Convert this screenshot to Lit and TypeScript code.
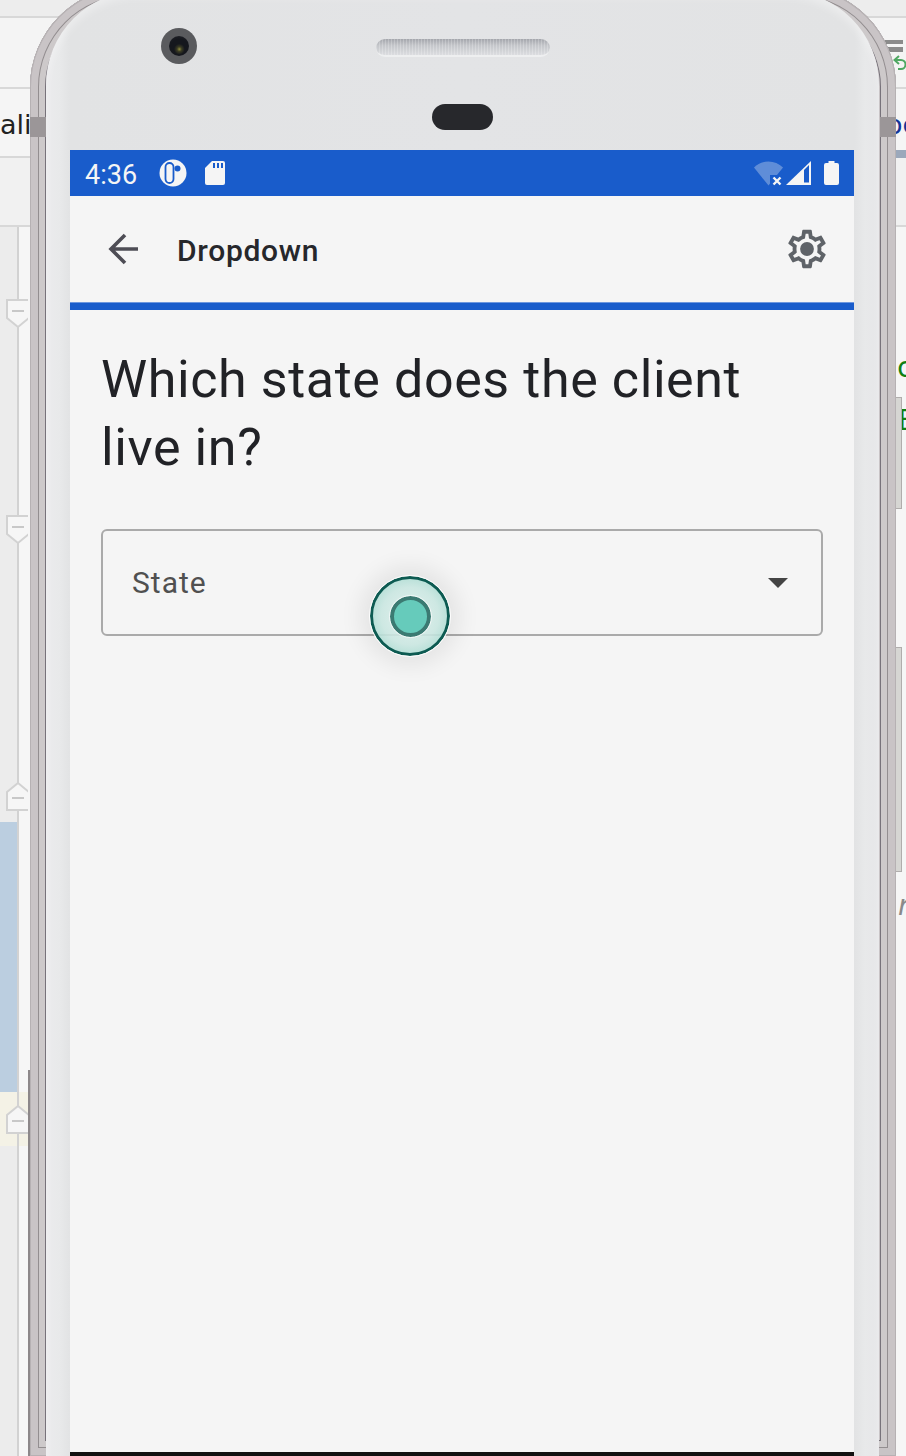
import {LitElement, css, html, svg} from "lit";
import {customElement} from "lit/decorators.js";

const GEAR = "M19.43 12.98c.04-.32.07-.64.07-.98 0-.34-.03-.66-.07-.98l2.11-1.65c.19-.15.24-.42.12-.64l-2-3.46c-.09-.16-.26-.25-.44-.25-.06 0-.12.01-.17.03l-2.49 1c-.52-.4-1.08-.73-1.69-.98l-.38-2.65C14.46 2.18 14.25 2 14 2h-4c-.25 0-.46.18-.49.42l-.38 2.65c-.61.25-1.17.59-1.69.98l-2.49-1c-.06-.02-.12-.03-.18-.03-.17 0-.34.09-.43.25l-2 3.46c-.13.22-.07.49.12.64l2.11 1.65c-.04.32-.07.65-.07.98 0 .33.03.66.07.98l-2.11 1.65c-.19.15-.24.42-.12.64l2 3.46c.09.16.26.25.44.25.06 0 .12-.01.17-.03l2.49-1c.52.4 1.08.73 1.69.98l.38 2.65c.03.24.24.42.49.42h4c.25 0 .46-.18.49-.42l.38-2.65c.61-.25 1.17-.59 1.69-.98l2.49 1c.06.02.12.03.18.03.17 0 .34-.09.43-.25l2-3.46c.12-.22.07-.49-.12-.64l-2.11-1.65zm-1.98-1.71c.04.31.05.52.05.73 0 .21-.02.43-.05.73l-.14 1.13.89.7 1.08.84-.7 1.21-1.27-.51-1.04-.42-.9.68c-.43.32-.84.56-1.25.73l-1.06.43-.16 1.13-.2 1.35h-1.4l-.19-1.35-.16-1.13-1.06-.43c-.43-.18-.83-.41-1.23-.71l-.91-.7-1.06.43-1.27.51-.7-1.21 1.08-.84.89-.7-.14-1.13c-.03-.31-.05-.54-.05-.74s.02-.43.05-.73l.14-1.13-.89-.7-1.08-.84.7-1.21 1.27.51 1.04.42.9-.68c.43-.32.84-.56 1.25-.73l1.06-.43.16-1.13.2-1.35h1.39l.19 1.35.16 1.13 1.06.43c.43.18.83.41 1.23.71l.91.7 1.06-.43 1.27-.51.7 1.21-1.07.85-.89.7.14 1.13z";

// the little fold markers in the editor gutter behind the phone
const foldDown = (top: number) => svg`
    <svg class="fold" style="top:${top}px" width="28" height="30" viewBox="0 0 28 30">
        <path d="M7 1H29V19L18 28 7 19Z" fill="#f6f6f6" stroke="#d2d2d2" stroke-width="2"/>
        <path d="M12 12h12" stroke="#c8c8c8" stroke-width="2"/>
    </svg>`;
const foldUp = (top: number) => svg`
    <svg class="fold" style="top:${top}px" width="28" height="30" viewBox="0 0 28 30">
        <path d="M7 28H29V10L18 1 7 10Z" fill="#f6f6f6" stroke="#d2d2d2" stroke-width="2"/>
        <path d="M12 16h12" stroke="#c8c8c8" stroke-width="2"/>
    </svg>`;

@customElement("app-root")
export class AppRoot extends LitElement {
    static styles = css`
        :host {
            display: block;
            position: relative;
            width: 906px;
            height: 1456px;
            overflow: hidden;
            background: #f6f6f6;
            font-family: Roboto, "Liberation Sans", sans-serif;
        }

        /* editor window behind the phone */
        .desk {
            display: flex;
            justify-content: space-between;
            height: 100%;
        }
        .side {
            display: flex;
            flex-direction: column;
            width: 100px;
        }
        .row {
            box-sizing: border-box;
            border-bottom: 2px solid #d8d8d8;
            overflow: hidden;
            white-space: nowrap;
        }
        .r0 { height: 18px; background: #ededed; }
        .r1 { height: 71px; background: #f4f4f4; }
        .r2 {
            height: 69px;
            background: #f5f5f5;
            font: 27px/72px "DejaVu Sans", sans-serif;
            color: #222;
        }
        .r3 { height: 69px; background: #f1f1f1; }
        .side.right .r2 {
            padding-left: 80px;
            color: #12349a;
            border-bottom: 8px solid #9ba8bb;
        }
        .gutter {
            position: relative;
            flex: 1;
            display: grid;
            grid-template-columns: 17px 2px 1fr;
        }
        .lane {
            display: flex;
            flex-direction: column;
            background: #ececec;
        }
        .lane .plain { height: 595px; }
        .lane .sel { height: 270px; background: #bbcee0; }
        .lane .warn { height: 54px; background: #f4f2e6; }
        .lane .rest { flex: 1; }
        .rule { background: #d2d2d2; }
        .pad { background: #f6f6f6; display: flex; flex-direction: column; }
        .pad .warn {
            height: 54px;
            margin-top: 865px;
            background: #f4f2e6;
        }
        .fold {
            position: absolute;
            left: 0;
        }
        .tail {
            flex: 1;
            position: relative;
            background: #f6f6f6;
        }
        .code {
            position: absolute;
            font: 28px/30px "DejaVu Sans Mono", monospace;
        }
        .code.green { color: #118011; top: 126px; left: 90px; }
        .code.dash { color: #118011; top: 179px; left: 92px; }
        .code.note { color: #8a8a8a; font-style: italic; top: 664px; left: 90px; }
        .bars {
            display: flex;
            flex-direction: column;
            align-items: flex-end;
            gap: 3px;
            padding: 22px 3px 0 0;
        }
        .bars i {
            display: block;
            width: 24px;
            height: 4px;
            background: #8b8b8b;
        }
        .bars i + i { height: 5px; }
        .undo {
            display: flex;
            gap: 0;
            margin-right: -3px;
        }
        .undo i {
            width: 14px;
            height: 4px;
            margin-top: 7px;
            background: #8b8b8b;
        }

        /* phone body */
        .shell {
            position: absolute;
            left: 30px;
            top: -13px;
            box-sizing: border-box;
            width: 866px;
            height: 1469px;
            padding: 4px 17px 0 16px;
            display: flex;
            border-radius: 100px 100px 0 0;
            background: #c9c4c6;
            box-shadow:
                inset 0 0 0 1px #b6b1b3,
                inset 0 0 0 8px #c9c4c6,
                inset 0 0 0 9px #938e90,
                inset 0 0 0 15px #cdc9ca,
                inset 0 0 0 16px #77727a;
        }
        .band {
            position: absolute;
            top: 130px;
            width: 16px;
            height: 20px;
            background: #9b9698;
        }
        .band.l { left: 0; }
        .band.r { right: 0; }
        .strip {
            position: absolute;
            left: -2px;
            top: 1083px;
            bottom: 0;
            width: 2px;
            background: #8c8789;
        }
        .key {
            position: absolute;
            left: 866px;
            box-sizing: border-box;
            width: 6px;
            border: 1px solid #b0adac;
            border-left: 0;
            background: #d6d6d3;
        }
        .key.a { top: 410px; height: 112px; }
        .key.b { top: 660px; height: 225px; }
        .bezel {
            flex: 1;
            display: flex;
            flex-direction: column;
            border-radius: 94px 94px 0 0;
            background: linear-gradient(90deg, #ebebed 0, #e8e9ea 14px, #e2e3e4 24px, #e3e4e6 50%, #e2e3e4 calc(100% - 24px), #e8e9ea calc(100% - 14px), #e6e6e8 100%);
            box-shadow: inset 0 6px 8px rgba(255, 255, 255, .35);
        }
        .top {
            display: grid;
            grid-template-columns: 1fr auto 1fr;
            height: 159px;
        }
        .camera {
            display: flex;
            align-items: center;
            justify-content: center;
            justify-self: start;
            width: 36px;
            height: 36px;
            margin: 37px 0 0 115px;
            border-radius: 50%;
            background: #5a5b5e;
        }
        .camera span {
            width: 20px;
            height: 20px;
            border-radius: 50%;
            background: radial-gradient(circle at 52% 66%, #8d8a3c 0, #3a3b24 14%, #15171d 32%, #15171d 60%, #25262c 100%);
        }
        .middle {
            display: flex;
            flex-direction: column;
            align-items: center;
        }
        .speaker {
            box-sizing: border-box;
            width: 174px;
            height: 18px;
            margin-top: 48px;
            border-radius: 9px;
            border-bottom: 2px solid #eeeff0;
            background:
                repeating-linear-gradient(90deg, rgba(255, 255, 255, .22) 0 1px, transparent 1px 3px),
                linear-gradient(180deg, #a4a6ac 0, #c4c6ca 40%, #dcdde0 100%);
        }
        .sensor {
            width: 61px;
            height: 26px;
            margin-top: 47px;
            border-radius: 13px;
            background: #27282c;
        }

        /* device screen */
        .screen {
            flex: 1;
            display: flex;
            flex-direction: column;
            margin: 0 25px 0 24px;
            background: #f5f5f5;
        }
        .status {
            display: flex;
            align-items: center;
            flex: none;
            height: 46px;
            padding: 0 15px;
            background: #195ccb;
            color: #f5f5f5;
        }
        .clock {
            width: 74px;
            margin-top: 3px;
            font-size: 27px;
            line-height: 40px;
        }
        .status svg { display: block; }
        .sd { margin-left: 18px; }
        .status .spacer { flex: 1; }
        .bar {
            display: flex;
            align-items: center;
            flex: none;
            height: 106px;
            box-sizing: border-box;
            padding: 0 24px 0 37px;
        }
        .title {
            flex: 1;
            margin: 2px 0 0 36px;
            font-size: 30px;
            font-weight: 500;
            letter-spacing: .7px;
            color: #26272b;
        }
        .rail {
            flex: none;
            height: 8px;
            box-sizing: border-box;
            border-top: 1px solid #6d97de;
            background: #195ccb;
        }
        .content {
            flex: 1;
            padding: 36px 31px 0;
        }
        h1 {
            margin: 0 0 47px;
            font-size: 52px;
            line-height: 68px;
            font-weight: 400;
            letter-spacing: .6px;
            color: #212226;
        }
        .select {
            position: relative;
            display: flex;
            align-items: center;
            justify-content: space-between;
            box-sizing: border-box;
            height: 107px;
            padding: 0 33px 0 29px;
            border: 2px solid #aaaaaa;
            border-radius: 6px;
            font-size: 30px;
            letter-spacing: 1px;
            color: #505050;
        }
        .caret {
            width: 0;
            height: 0;
            border-left: 10px solid transparent;
            border-right: 10px solid transparent;
            border-top: 10px solid #444;
        }
        .touch {
            position: absolute;
            left: 267px;
            top: 45px;
            display: flex;
            align-items: center;
            justify-content: center;
            box-sizing: border-box;
            width: 80px;
            height: 80px;
            border-radius: 50%;
            border: 3px solid #0d5b52;
            outline: 1.5px solid #fff;
            background: radial-gradient(circle, rgba(226, 241, 238, .88) 0, rgba(200, 230, 224, .88) 55%, rgba(146, 210, 197, .92) 100%);
            box-shadow: 0 0 22px 10px rgba(0, 0, 0, .07);
        }
        .touch span {
            box-sizing: border-box;
            width: 41px;
            height: 41px;
            border-radius: 50%;
            border: 4px solid #3b7a72;
            outline: 1.5px solid #f2f8f7;
            background: #66cbbb;
        }
        .nav {
            flex: none;
            height: 4px;
            background: #111;
        }
    `;

    protected render() {
        return html`
            <div class="desk">
                <div class="side">
                    <div class="row r0"></div>
                    <div class="row r1"></div>
                    <div class="row r2">ali</div>
                    <div class="row r3"></div>
                    <div class="gutter">
                        <div class="lane">
                            <div class="plain"></div>
                            <div class="sel"></div>
                            <div class="warn"></div>
                            <div class="rest"></div>
                        </div>
                        <div class="rule"></div>
                        <div class="pad"><div class="warn"></div></div>
                        ${foldDown(72)}
                        ${foldDown(288)}
                        ${foldUp(555)}
                        ${foldUp(878)}
                    </div>
                </div>
                <div class="side right">
                    <div class="row r0"></div>
                    <div class="row r1 bars">
                        <i></i><i></i>
                        <div class="undo">
                            <i></i>
                            <svg width="13" height="16" viewBox="0 0 13 16">
                                <path d="M6 1 1.5 5 6 9M2 5h6a4 4 0 0 1 0 9H5" fill="none" stroke="#4fa862" stroke-width="2"/>
                            </svg>
                        </div>
                    </div>
                    <div class="row r2">oc</div>
                    <div class="row r3"></div>
                    <div class="tail">
                        <span class="code green">c</span>
                        <span class="code dash">E</span>
                        <span class="code note">r</span>
                    </div>
                </div>
            </div>

            <div class="shell">
                <div class="band l"></div>
                <div class="band r"></div>
                <div class="strip"></div>
                <div class="key a"></div>
                <div class="key b"></div>
                <div class="bezel">
                    <div class="top">
                        <div class="camera"><span></span></div>
                        <div class="middle">
                            <div class="speaker"></div>
                            <div class="sensor"></div>
                        </div>
                        <div></div>
                    </div>
                    <div class="screen">
                        <div class="status">
                            <span class="clock">4:36</span>
                            <svg width="28" height="28" viewBox="0 0 28 28">
                                <circle cx="14" cy="14" r="13.5" fill="#f5f5f5"/>
                                <rect x="6.5" y="4" width="8" height="20" rx="4" fill="#f5f5f5" stroke="#195ccb" stroke-width="1.8"/>
                                <circle cx="18.5" cy="9.5" r="3" fill="#195ccb"/>
                            </svg>
                            <svg class="sd" width="20" height="24" viewBox="0 0 20 24">
                                <path d="M7 0H18a2 2 0 0 1 2 2V22a2 2 0 0 1-2 2H2a2 2 0 0 1-2-2V7Z" fill="#f5f5f5"/>
                                <path d="M8 2h2v5H8zM12 2h2v5h-2zM16 2h2v5h-2z" fill="#195ccb"/>
                            </svg>
                            <span class="spacer"></span>
                            <svg width="29" height="25" viewBox="0 0 29 25">
                                <path d="M0 6.5C8-1.5 21-1.5 29 6.5L14.5 24.5Z" fill="#f5f5f5" fill-opacity=".32"/>
                                <path d="M16 14h13v11H16z" fill="#195ccb"/>
                                <path d="M19.5 16.5l7 7M26.5 16.5l-7 7" stroke="#f5f5f5" stroke-width="2.4"/>
                            </svg>
                            <svg style="margin-left:3px" width="25" height="24" viewBox="0 0 25 24">
                                <path d="M25 0V24H0Z" fill="#f5f5f5"/>
                                <path d="M18 9V21.5H23V4Z" fill="#195ccb"/>
                            </svg>
                            <svg style="margin-left:13px" width="15" height="24" viewBox="0 0 15 24">
                                <path d="M4.5 0h6v2h2.5a2 2 0 0 1 2 2V22a2 2 0 0 1-2 2H2a2 2 0 0 1-2-2V4a2 2 0 0 1 2-2h2.5Z" fill="#f5f5f5"/>
                            </svg>
                        </div>
                        <div class="bar">
                            <svg width="34" height="34" viewBox="0 0 34 34">
                                <path d="M31 17H5M18 3 4 17l14 14" fill="none" stroke="#4e4d55" stroke-width="3.6"/>
                            </svg>
                            <span class="title">Dropdown</span>
                            <svg width="46" height="46" viewBox="0 0 24 24" fill="#5f6368">
                                <path d=${GEAR}/>
                                <circle cx="12" cy="12" r="3.6"/>
                            </svg>
                        </div>
                        <div class="rail"></div>
                        <div class="content">
                            <h1>Which state does the client live in?</h1>
                            <div class="select">
                                <span>State</span>
                                <span class="caret"></span>
                                <div class="touch"><span></span></div>
                            </div>
                        </div>
                        <div class="nav"></div>
                    </div>
                </div>
            </div>
        `;
    }
}
